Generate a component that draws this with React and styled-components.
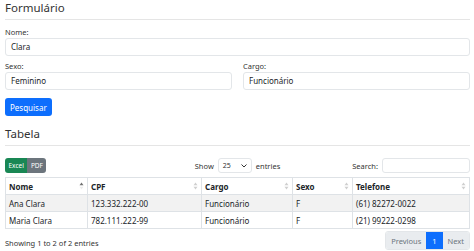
import React from "react"
import styled, { createGlobalStyle } from "styled-components"

const GlobalStyle = createGlobalStyle`
    * { box-sizing: border-box; }
    body {
        margin: 0;
        background: #fff;
        color: #212529;
        font-family: "Noto Sans", "Open Sans", sans-serif;
        font-size: 8.5px;
    }
`

const Page = styled.div`
    padding: 0 4px 0 5px;
`

const Heading = styled.h2`
    margin: 0;
    padding: 1px 0 4px;
    font-size: 11.5px;
    font-weight: 400;
    line-height: 14px;
    color: #333;
    border-bottom: 1px solid #e5e5e5;
`

const Form = styled.div`
    display: flex;
    flex-direction: column;
    gap: 5px;
    padding-top: 7px;
`

const Row = styled.div`
    display: grid;
    grid-template-columns: ${ p => p.cols || "1fr" };
    gap: 11px;
`

const Field = styled.label`
    display: flex;
    flex-direction: column;
    gap: 1px;
    font-size: 7.5px;
    line-height: 10px;
    color: #333;
`

const Input = styled.div`
    height: 18px;
    padding: 0 5px;
    display: flex;
    align-items: center;
    border: 1px solid #e3e6e9;
    border-radius: 3px;
    font-size: 8px;
    color: #212529;
`

const Button = styled.button`
    align-self: flex-start;
    margin-top: 3px;
    height: 18px;
    padding: 0 5px;
    border: none;
    border-radius: 3px;
    background: #0d6efd;
    color: #fff;
    font: inherit;
    font-size: 8px;
`

const TableHeading = styled( Heading )`
    margin-top: 10px;
`

const Toolbar = styled.div`
    display: grid;
    grid-template-columns: 1fr auto 1fr;
    align-items: center;
    margin-top: 12px;
    height: 15px;
`

const ButtonGroup = styled.div`
    display: flex;
    border-radius: 3px;
    overflow: hidden;
    justify-self: start;
`

const GroupButton = styled.span`
    height: 15px;
    padding: 0 3.5px;
    display: flex;
    align-items: center;
    background: ${ p => p.bg };
    color: #fff;
    font-size: 6.5px;
`

const Length = styled.div`
    display: flex;
    align-items: center;
    gap: 4px;
    font-size: 7.5px;
    color: #333;
`

const Select = styled.div`
    width: 34px;
    height: 15px;
    padding: 0 4px;
    display: flex;
    align-items: center;
    justify-content: space-between;
    border: 1px solid #e3e6e9;
    border-radius: 3px;
    font-size: 7px;
`

const SearchBox = styled.div`
    justify-self: end;
    display: flex;
    align-items: center;
    gap: 4px;
    font-size: 7.5px;
    color: #333;
`

const SearchInput = styled.div`
    width: 88px;
    height: 15px;
    border: 1px solid #e3e6e9;
    border-radius: 3px;
`

const Table = styled.table`
    width: 100%;
    margin-top: 4px;
    border-collapse: collapse;
    font-size: 8px;
    border-bottom: 1px solid #dee2e6;
`

const Th = styled.th`
    height: 17px;
    padding: 0 3px;
    text-align: left;
    font-weight: 700;
    border-top: 1px solid #dee2e6;
    border-bottom: 1px solid #dee2e6;
    border-left: 1px solid #dee2e6;
    border-right: ${ p => p.last ? "1px solid #dee2e6" : "none" };
    width: ${ p => p.w }px;
`

const ThInner = styled.div`
    display: flex;
    align-items: center;
    justify-content: space-between;
`

const SortIcon = ({ active }) => (
    <svg width="5" height="8" viewBox="0 0 5 8">
        <path d="M2.5 0.5 L4.5 3.3 L0.5 3.3 Z" fill={ active ? "#707070" : "#cfcfcf" } />
        <path d="M2.5 7.5 L4.5 4.7 L0.5 4.7 Z" fill={ active ? "#ececec" : "#cfcfcf" } />
    </svg>
)

const Tr = styled.tr`
    background: ${ p => p.striped ? "#f2f2f2" : "#fff" };
`

const Td = styled.td`
    height: 17px;
    padding: 0 3px;
    border-left: 1px solid #dee2e6;
    border-right: ${ p => p.last ? "1px solid #dee2e6" : "none" };
    border-bottom: ${ p => p.line ? "1px solid #dee2e6" : "none" };
`

const Footer = styled.div`
    display: flex;
    justify-content: space-between;
    align-items: center;
    margin-top: 2px;
`

const Info = styled.div`
    font-size: 7.5px;
    color: #333;
    padding-top: 5px;
`

const Pagination = styled.div`
    display: flex;
    border-radius: 3px;
    overflow: hidden;
    height: 19px;
    border: 1px solid #e3e6e9;
`

const PageItem = styled.span`
    padding: 0 ${ p => p.active ? 6 : 5 }px;
    display: flex;
    align-items: center;
    font-size: 7.5px;
    background: ${ p => p.active ? "#0d6efd" : "#e9ecef" };
    color: ${ p => p.active ? "#fff" : "#6c757d" };
`

const columns = [
    { name: "Nome", w: 82, active: true },
    { name: "CPF", w: 114 },
    { name: "Cargo", w: 91 },
    { name: "Sexo", w: 60 },
    { name: "Telefone" },
]

const rows = [
    [ "Ana Clara", "123.332.222-00", "Funcionário", "F", "(61) 82272-0022" ],
    [ "Maria Clara", "782.111.222-99", "Funcionário", "F", "(21) 99222-0298" ],
]

const App = () => (
    <Page>
        <GlobalStyle />
        <Heading>Formulário</Heading>
        <Form>
            <Field>
                Nome:
                <Input>Clara</Input>
            </Field>
            <Row cols="1fr 1fr">
                <Field>
                    Sexo:
                    <Input>Feminino</Input>
                </Field>
                <Field>
                    Cargo:
                    <Input>Funcionário</Input>
                </Field>
            </Row>
            <Button>Pesquisar</Button>
        </Form>

        <TableHeading>Tabela</TableHeading>
        <Toolbar>
            <ButtonGroup>
                <GroupButton bg="#198754">Excel</GroupButton>
                <GroupButton bg="#6c757d">PDF</GroupButton>
            </ButtonGroup>
            <Length>
                Show
                <Select>
                    25
                    <svg width="6" height="4" viewBox="0 0 6 4">
                        <path d="M0.5 0.5 L3 3 L5.5 0.5" fill="none" stroke="#333" strokeWidth="1" />
                    </svg>
                </Select>
                entries
            </Length>
            <SearchBox>
                Search:
                <SearchInput />
            </SearchBox>
        </Toolbar>

        <Table>
            <thead>
                <tr>
                    { columns.map( ( col, i ) => (
                        <Th key={ i } w={ col.w } last={ i === columns.length - 1 }>
                            <ThInner>
                                { col.name }
                                <SortIcon active={ col.active } />
                            </ThInner>
                        </Th>
                    ) ) }
                </tr>
            </thead>
            <tbody>
                { rows.map( ( row, r ) => (
                    <Tr key={ r } striped={ r % 2 === 0 }>
                        { row.map( ( cell, i ) => (
                            <Td key={ i } last={ i === row.length - 1 } line={ r === 0 }>{ cell }</Td>
                        ) ) }
                    </Tr>
                ) ) }
            </tbody>
        </Table>

        <Footer>
            <Info>Showing 1 to 2 of 2 entries</Info>
            <Pagination>
                <PageItem>Previous</PageItem>
                <PageItem active>1</PageItem>
                <PageItem>Next</PageItem>
            </Pagination>
        </Footer>
    </Page>
)

export default App
